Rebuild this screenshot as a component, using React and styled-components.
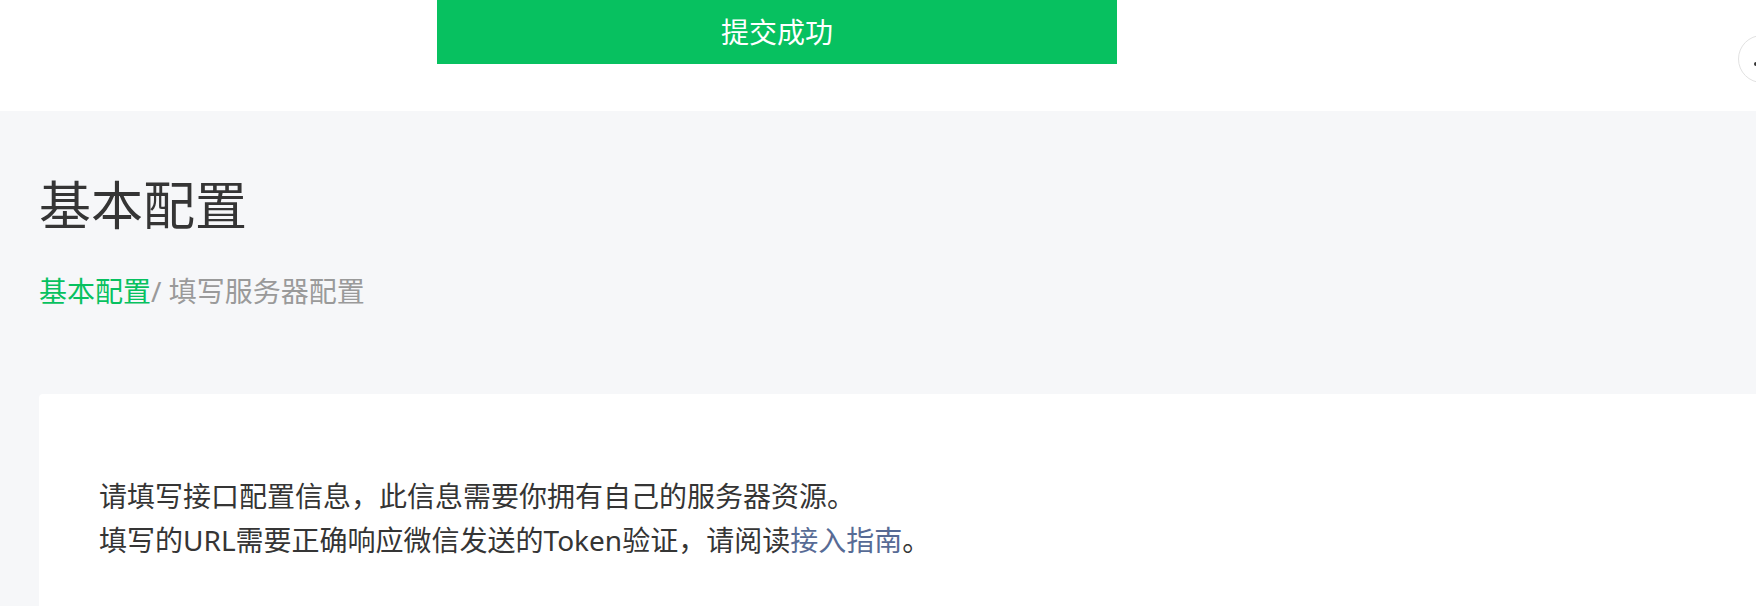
import React from "react";
import styled, { createGlobalStyle } from "styled-components";

const GlobalStyle = createGlobalStyle`
  html, body {
    margin: 0;
    padding: 0;
    background: #f6f7f9;
    overflow: hidden;
  }
  body {
    font-family: "Noto Sans", "Noto Sans CJK SC", sans-serif;
    color: #353535;
  }
`;

const Header = styled.header`
  height: 111px;
  background: #fff;
  display: flex;
  align-items: flex-start;
  overflow: hidden;
`;

const Toast = styled.div`
  flex-shrink: 0;
  margin-left: 437px;
  width: 680px;
  height: 64px;
  background: #07c160;
  color: #fff;
  font-size: 28px;
  display: flex;
  align-items: center;
  justify-content: center;
  padding-bottom: 2px;
  box-sizing: border-box;
`;

const Avatar = styled.div`
  flex-shrink: 0;
  margin-left: 621px;
  margin-top: 35px;
  width: 48px;
  height: 48px;
  border-radius: 50%;
  border: 1px solid #e2e2e2;
  background: #fff;
  box-sizing: border-box;
  position: relative;

  &::after {
    content: "";
    position: absolute;
    left: 15px;
    top: 26px;
    width: 4px;
    height: 4px;
    border-radius: 50%;
    background: #333;
  }
`;

const Main = styled.main`
  padding: 64px 0 0 39px;
`;

const Title = styled.h1`
  margin: 0;
  font-size: 52px;
  line-height: 60px;
  font-weight: 400;
  color: #353535;
`;

const Crumbs = styled.div`
  margin-top: 36px;
  font-size: 28px;
  line-height: 40px;
  color: #9a9a9a;
`;

const CrumbLink = styled.span`
  color: #07c160;
`;

const Card = styled.section`
  margin-top: 83px;
  width: calc(100% + 20px);
  min-height: 240px;
  background: #fff;
  border-radius: 4px;
  padding: 80px 60px 40px;
  box-sizing: border-box;
`;

const Tip = styled.p`
  margin: 0;
  font-size: 28px;
  line-height: 44px;
  color: #353535;
`;

const Link = styled.a`
  color: #576b95;
  text-decoration: none;
`;

export default function App() {
  return (
    <>
      <GlobalStyle />
      <Header>
        <Toast>提交成功</Toast>
        <Avatar />
      </Header>
      <Main>
        <Title>基本配置</Title>
        <Crumbs>
          <CrumbLink>基本配置</CrumbLink>/ 填写服务器配置
        </Crumbs>
        <Card>
          <Tip>请填写接口配置信息，此信息需要你拥有自己的服务器资源。</Tip>
          <Tip>
            填写的URL需要正确响应微信发送的Token验证，请阅读
            <Link href="#">接入指南</Link>。
          </Tip>
        </Card>
      </Main>
    </>
  );
}
